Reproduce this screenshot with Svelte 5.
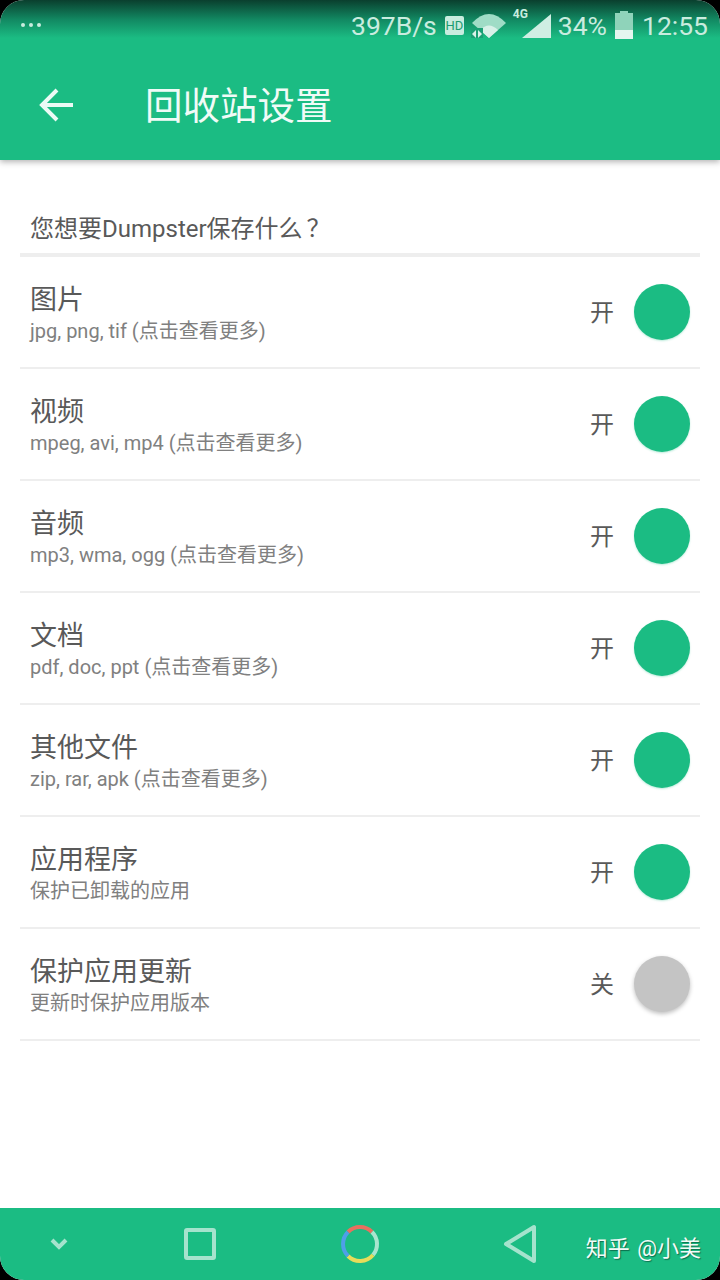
<script lang="ts">
  type Row = { title: string; sub: string; on: boolean };

  const rows: Row[] = [
    { title: '图片', sub: 'jpg, png, tif (点击查看更多)', on: true },
    { title: '视频', sub: 'mpeg, avi, mp4 (点击查看更多)', on: true },
    { title: '音频', sub: 'mp3, wma, ogg (点击查看更多)', on: true },
    { title: '文档', sub: 'pdf, doc, ppt (点击查看更多)', on: true },
    { title: '其他文件', sub: 'zip, rar, apk (点击查看更多)', on: true },
    { title: '应用程序', sub: '保护已卸载的应用', on: true },
    { title: '保护应用更新', sub: '更新时保护应用版本', on: false }
  ];
</script>

<div class="screen">
  <header class="top">
    <div class="status">
      <div class="dots"><span></span><span></span><span></span></div>
      <div class="status-right">
        <span class="speed">397B/s</span>
        <span class="hd">HD</span>
        <svg class="wifi" width="36" height="26" viewBox="0 0 36 26">
          <path d="M1 11 Q18 -7 35 11 L18 26 Z" fill="#9fdcc6" />
          <path d="M9 18 Q18 9 27 18 L18 26 Z" fill="#d8f1e8" />
          <path d="M0 16 H12 V26 H0 Z" fill="#1a9f74" />
          <path d="M5 18 L1 22 L5 26 Z M7 18 L11 22 L7 26 Z" fill="#d8f1e8" />
        </svg>
        <span class="net">
          <span class="g4">4G</span>
          <svg width="29" height="25" viewBox="0 0 29 25"><path d="M0 25 L29 1 V25 Z" fill="#cfeee3" /></svg>
        </span>
        <span class="pct">34%</span>
        <svg class="batt" width="18" height="28" viewBox="0 0 18 28">
          <path d="M5 0 H13 V2 H18 V28 H0 V2 H5 Z" fill="#8fd3ba" />
          <rect y="19" width="18" height="9" fill="#e4f6ef" />
        </svg>
        <span class="clock">12:55</span>
      </div>
    </div>
    <div class="bar">
      <svg class="back" width="36" height="36" viewBox="0 0 36 36" fill="none" stroke="#ecfaf5" stroke-width="4">
        <path d="M35 18 H5" />
        <path d="M19 3 L4 18 L19 33" />
      </svg>
      <h1>回收站设置</h1>
    </div>
  </header>

  <main class="content">
    <div class="heading">您想要Dumpster保存什么<span class="q">？</span></div>
    {#each rows as row}
      <div class="row">
        <div class="labels">
          <div class="title">{row.title}</div>
          <div class="sub">{row.sub}</div>
        </div>
        <span class="state">{row.on ? '开' : '关'}</span>
        <span class="knob" class:off={!row.on}></span>
      </div>
    {/each}
  </main>

  <footer class="nav">
    <svg class="chev" width="20" height="14" viewBox="0 0 20 14" fill="none" stroke="#a5e3cd" stroke-width="4">
      <path d="M3 3 L10 10 L17 3" />
    </svg>
    <span class="square"></span>
    <svg class="ring" width="40" height="40" viewBox="0 0 40 40" fill="none" stroke-width="4">
      <path d="M8 8 A17 17 0 0 1 32 8" stroke="#e8705f" />
      <path d="M32 8 A17 17 0 0 1 33 31" stroke="#a9e5cf" />
      <path d="M33 31 A17 17 0 0 1 8 32" stroke="#e6dc5a" />
      <path d="M8 32 A17 17 0 0 1 8 8" stroke="#4f9fe8" />
    </svg>
    <svg class="tri" width="36" height="40" viewBox="0 0 36 40" fill="none" stroke="#a5e3cd" stroke-width="4" stroke-linejoin="round">
      <path d="M32 3 V37 L4 20 Z" />
    </svg>
    <span class="mark">知乎 @小美</span>
  </footer>
</div>

<style>
  :global(body) {
    margin: 0;
    background: #000;
  }

  .screen {
    width: 720px;
    height: 1280px;
    display: flex;
    flex-direction: column;
    background: #fff;
    border-radius: 24px;
    overflow: hidden;
    font-family: Roboto, "Noto Sans CJK SC", sans-serif;
  }

  .top {
    height: 160px;
    flex: none;
    background: linear-gradient(#0a3f2e 0, #128a63 20px, #1bbc83 38px, #1bbc83 100%);
    box-shadow: 0 2px 6px rgba(0, 0, 0, 0.3);
    position: relative;
  }

  .status {
    height: 50px;
    display: flex;
    justify-content: space-between;
    align-items: center;
    padding: 0 12px 0 21px;
    color: #c9ecdf;
  }

  .dots {
    display: flex;
    gap: 4px;
  }

  .dots span {
    width: 4px;
    height: 4px;
    border-radius: 50%;
    background: #c9ecdf;
  }

  .status-right {
    display: flex;
    align-items: center;
    font-size: 26.5px;
  }

  .speed {
    margin-right: 8px;
  }

  .hd {
    width: 19px;
    height: 19px;
    background: #c9ecdf;
    color: #1a9c70;
    font-size: 13px;
    line-height: 19px;
    text-align: center;
    border-radius: 2px;
    margin-right: 7px;
  }

  .wifi {
    margin-right: 15px;
  }

  .net {
    position: relative;
    display: flex;
    margin-right: 7px;
  }

  .g4 {
    position: absolute;
    left: -9px;
    top: -6px;
    font-size: 12px;
    line-height: 14px;
    font-weight: 700;
  }

  .pct {
    margin-right: 8px;
  }

  .batt {
    margin-right: 9px;
  }

  .bar {
    height: 110px;
    display: flex;
    align-items: center;
    padding-left: 38px;
    box-sizing: border-box;
  }

  .back {
    flex: none;
  }

  h1 {
    margin: 0 0 5px 71px;
    font-size: 37.5px;
    font-weight: 400;
    color: #f0fbf7;
  }

  .content {
    flex: 1;
    padding: 0 20px;
  }

  .heading {
    height: 97px;
    box-sizing: border-box;
    padding: 51px 0 0 10px;
    font-size: 24px;
    line-height: 36px;
    color: #595959;
    border-bottom: 4px solid #eeeeee;
  }

  .q {
    margin-left: 4px;
  }

  .row {
    height: 112px;
    box-sizing: border-box;
    display: flex;
    align-items: center;
    padding: 0 10px;
    border-bottom: 2px solid #eeeeee;
  }

  .labels {
    flex: 1;
    padding-top: 2px;
  }

  .title {
    font-size: 27px;
    line-height: 36px;
    color: #595959;
  }

  .sub {
    font-size: 20px;
    line-height: 26px;
    color: #808080;
  }

  .state {
    font-size: 24px;
    color: #595959;
    margin-right: 20px;
    margin-bottom: 3px;
  }

  .knob {
    width: 56px;
    height: 56px;
    border-radius: 50%;
    background: #1bbc83;
    box-shadow: 0 1px 2px rgba(27, 188, 131, 0.3);
  }

  .knob.off {
    background: #c4c4c4;
    box-shadow: 0 2px 4px rgba(0, 0, 0, 0.25);
  }

  .nav {
    height: 72px;
    flex: none;
    position: relative;
    display: flex;
    align-items: center;
    background: #1bbc83;
  }

  .chev {
    margin-left: 49px;
  }

  .square {
    width: 24px;
    height: 24px;
    border: 4px solid #a5e3cd;
    border-radius: 3px;
    margin-left: 115px;
  }

  .ring {
    margin-left: 124px;
  }

  .tri {
    margin-left: 122px;
  }

  .mark {
    position: absolute;
    right: 19px;
    top: 22px;
    font-size: 22px;
    word-spacing: 2px;
    color: #f2fbf8;
    text-shadow: 1px 1px 1px rgba(0, 60, 40, 0.6);
  }
</style>
